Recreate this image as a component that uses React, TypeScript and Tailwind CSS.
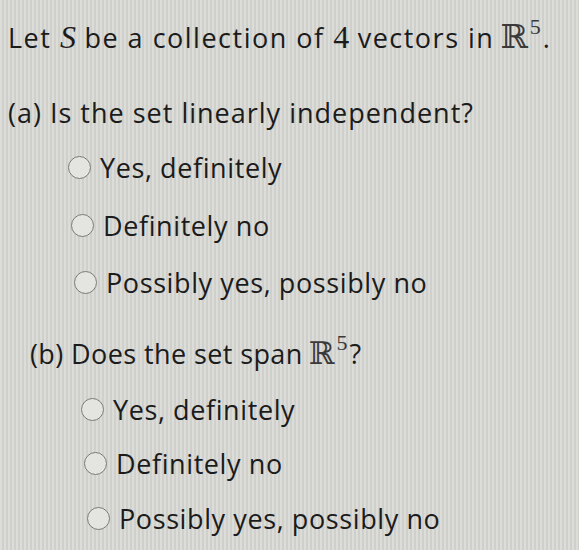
import React from 'react';

const font = { fontFamily: '"Open Sans", "DejaVu Sans", sans-serif' };

interface OptionProps {
  label: string;
  indent: string;
  gap: string;
}

// unselected radio + label
const Option: React.FC<OptionProps> = ({ label, indent, gap }) => (
  <div className={`flex items-center tracking-[0.6px] ${indent} ${gap}`}>
    <span className="w-[23px] h-[23px] rounded-full border-[1.5px] border-[#7a7a78] bg-[#e4e4e0] shrink-0" />
    <span className="ml-[9px]">{label}</span>
  </div>
);

const R5 = ({ size }: { size: string }) => (
  <span className={`font-['DejaVu_Serif',serif] text-[#3a3a3a] tracking-normal leading-none ml-[6px] ${size}`}>
    ℝ
    <span className="relative -top-[14px] text-[22px] ml-[2px] mr-[2px] font-['Liberation_Serif',serif]">5</span>
  </span>
);

export default function App() {
  return (
    <div
      className="w-[579px] h-[550px] overflow-hidden text-[27px] leading-none tracking-[1px] text-[#1b1b1b] bg-[repeating-linear-gradient(90deg,#dcdcd8_0px,#dcdcd8_2px,#cfcfcb_2px,#cfcfcb_4px)]"
      style={font}
    >
      <div className="h-[53px] pl-[8px] whitespace-nowrap flex items-end tracking-[1.5px]">
        <span>
          Let <span className="font-['Liberation_Serif',serif] italic text-[32px] tracking-normal">S</span> be a collection of{' '}
          <span className="font-['Liberation_Serif',serif] text-[32px] tracking-normal">4</span> vectors in<R5 size="text-[33px]" />.
        </span>
      </div>

      <div className="mt-[46px] pl-[8px] whitespace-nowrap">(a) Is the set linearly independent?</div>

      <Option label="Yes, definitely" indent="pl-[68px]" gap="mt-[28px]" />
      <Option label="Definitely no" indent="pl-[71px]" gap="mt-[31px]" />
      <Option label="Possibly yes, possibly no" indent="pl-[74px]" gap="mt-[30px]" />

      <div className="mt-[41px] pl-[30px] whitespace-nowrap tracking-[0.4px] h-[32px] flex items-end">
        <span>
          (b) Does the set span<R5 size="text-[31px]" />?
        </span>
      </div>

      <Option label="Yes, definitely" indent="pl-[81px]" gap="mt-[27px]" />
      <Option label="Definitely no" indent="pl-[84px]" gap="mt-[27px]" />
      <Option label="Possibly yes, possibly no" indent="pl-[87px]" gap="mt-[28px]" />
    </div>
  );
}
